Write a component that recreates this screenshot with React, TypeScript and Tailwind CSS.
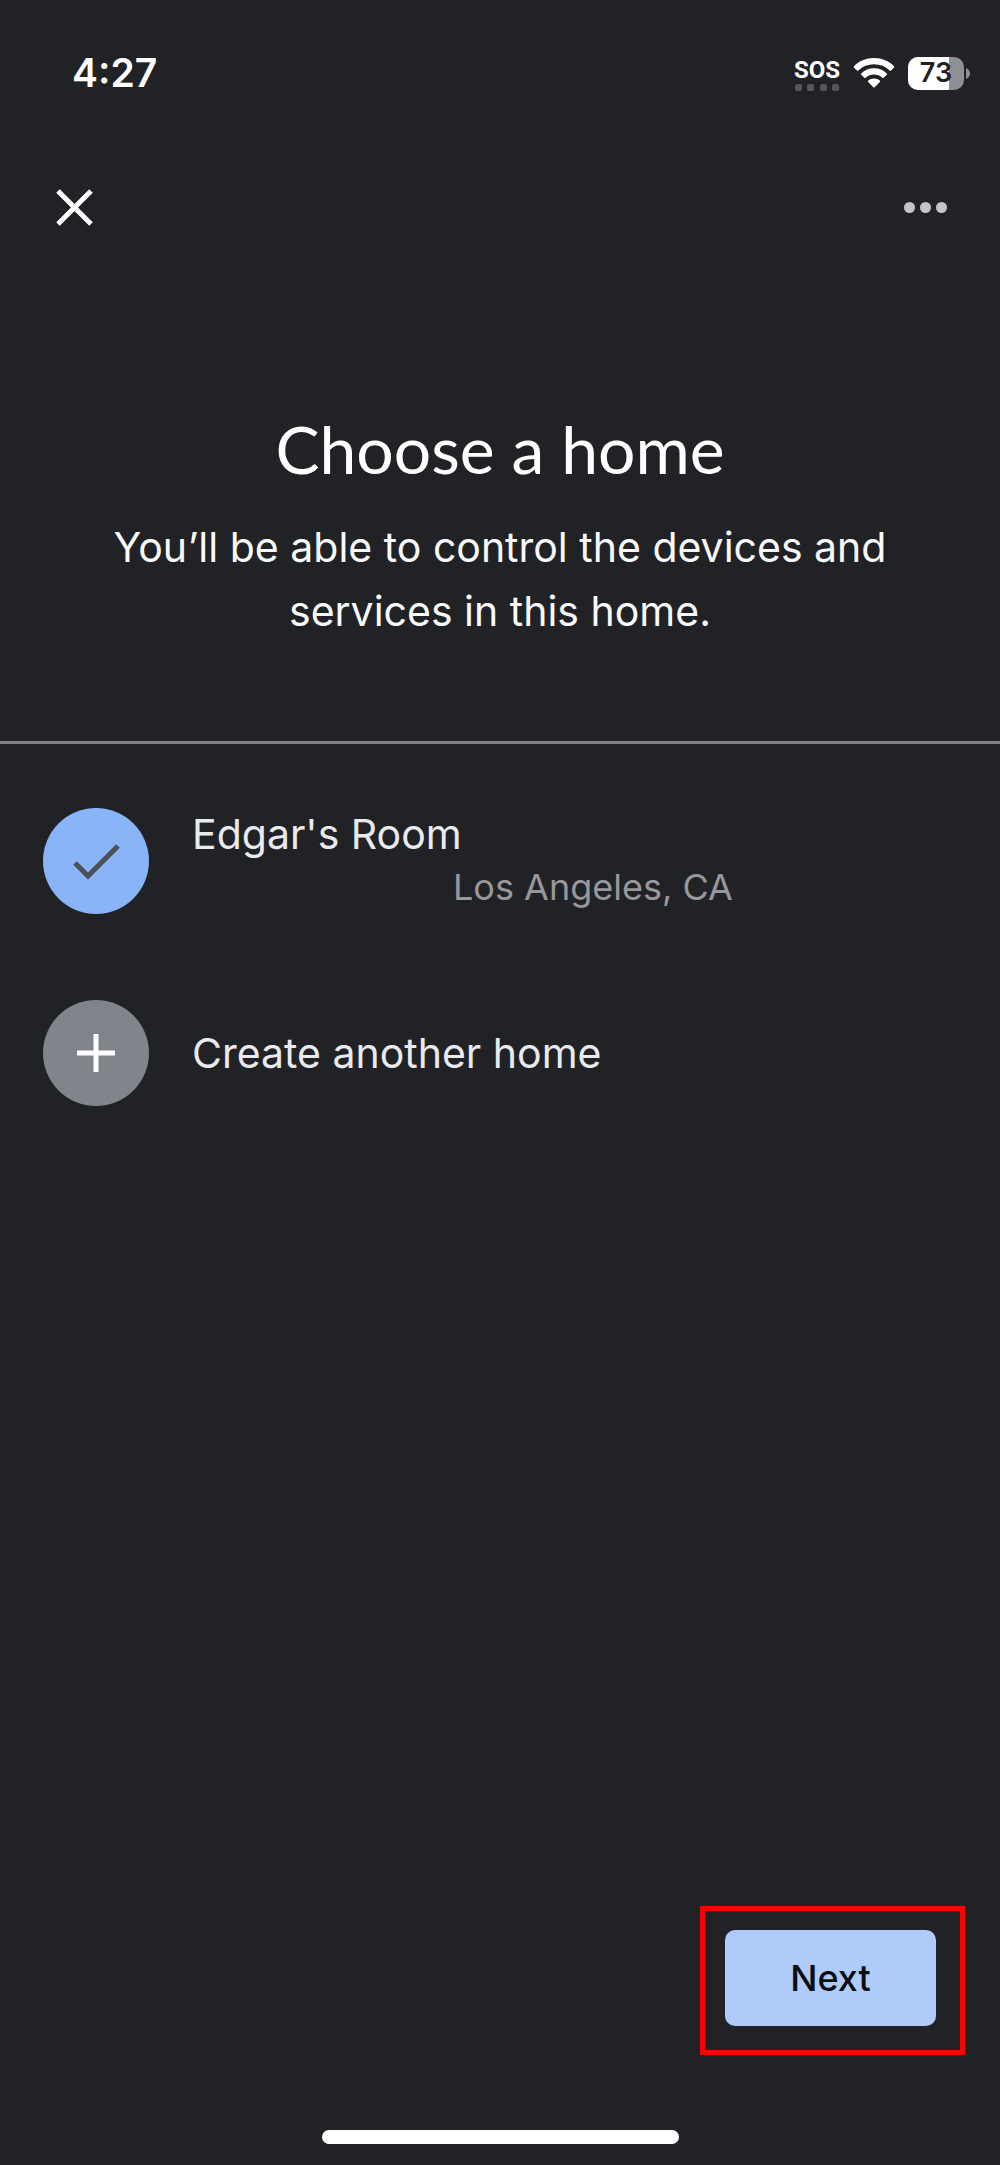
interface StatusBarProps {
  time: string
  battery: number
}

function StatusBar({ time, battery }: StatusBarProps) {
  return (
    <div className="flex h-[146px] items-center justify-between pl-[72px] pr-[30px] text-white">
      <time className="text-[39px] leading-[48px] font-semibold">{time}</time>

      <div className="flex items-center">
        <div className="flex w-11 flex-col items-center">
          <span className="font-['Roboto',sans-serif] text-[24px] leading-7 font-bold">SOS</span>
          <div className="flex w-full justify-between">
            <span className="size-[7px] rounded-xs bg-[#55565a]" />
            <span className="size-[7px] rounded-xs bg-[#55565a]" />
            <span className="size-[7px] rounded-xs bg-[#55565a]" />
            <span className="size-[7px] rounded-xs bg-[#55565a]" />
          </div>
        </div>

        <svg className="ml-[14px] h-8 w-[42px]" viewBox="0 0 42 32" fill="currentColor" aria-label="Wi-Fi">
          <path d="M21 1C13 1 6 4 1 9.200Q.4 10 1 10.700L4 13.600Q4.700 14.200 5.400 13.600C9.600 9.500 15 7.300 21 7.300S32.400 9.500 36.600 13.600Q37.300 14.200 38 13.600L41 10.700Q41.600 10 41 9.200C36 4 29 1 21 1Z" />
          <path d="M21 11.300C16 11.300 11.500 13.200 8.200 16.400Q7.500 17.100 8.200 17.800L11.300 20.800Q12 21.400 12.700 20.800C15 18.700 17.800 17.600 21 17.600S27 18.700 29.300 20.800Q30 21.400 30.700 20.800L33.800 17.800Q34.500 17.100 33.800 16.400C30.500 13.200 26 11.300 21 11.300Z" />
          <path d="M21 21.500C18.700 21.500 16.700 22.300 15.200 23.600Q14.500 24.300 15.200 25L20.300 30.200Q21 30.900 21.700 30.200L26.800 25Q27.500 24.300 26.800 23.600C25.300 22.300 23.300 21.500 21 21.500Z" />
        </svg>

        <div className="relative ml-[13px] flex h-[33px] w-14 items-center justify-center overflow-hidden rounded-[10px] bg-[#8f9093]">
          <div className="absolute inset-y-0 left-0 bg-white" style={{ width: `${battery}%` }} />
          <span className="relative text-[27px] leading-8 font-semibold text-[#212226]">{battery}</span>
        </div>
        <svg className="ml-0.5 h-[11px] w-1" viewBox="0 0 4 11" fill="#8f9093">
          <path d="M0 0C2.500 1 4 3 4 5.500S2.500 10 0 11Z" />
        </svg>
      </div>
    </div>
  )
}

export default function App() {
  return (
    <div className="flex min-h-screen flex-col bg-[#212226] font-['Inter',sans-serif]">
      <StatusBar time="4:27" battery={73} />

      <header className="flex h-[123px] items-center justify-between pl-14 pr-[53px]">
        <button type="button" aria-label="Close" className="text-white">
          <svg className="size-[37px]" viewBox="0 0 37 37" stroke="currentColor" strokeWidth="5">
            <path d="M2 2L35 35M35 2L2 35" />
          </svg>
        </button>
        <button type="button" aria-label="More options" className="flex gap-[5px]">
          <span className="size-[11px] rounded-full bg-[#c4c5c9]" />
          <span className="size-[11px] rounded-full bg-[#c4c5c9]" />
          <span className="size-[11px] rounded-full bg-[#c4c5c9]" />
        </button>
      </header>

      <main className="flex grow flex-col">
        <section className="border-b-3 border-[#808186] px-24 pt-[144px] pb-[98px] text-center">
          <h1 className="font-['Lato',sans-serif] text-[66px] leading-[72px] text-white">Choose a home</h1>
          <p className="mt-[30px] text-[41px] leading-[64px] text-[#f8f9fa]">
            You’ll be able to control the devices and services in this home.
          </p>
        </section>

        <section className="flex flex-col gap-[86px] px-[43px] pt-16 text-[41px] leading-[53px] text-[#e8eaed]">
          <label className="flex items-center gap-[43px]">
            <span className="relative size-[106px] shrink-0">
              <input
                type="radio"
                name="home"
                defaultChecked
                className="block size-full appearance-none rounded-full bg-[#8ab4f8]"
              />
              <svg
                className="pointer-events-none absolute inset-0 size-full"
                viewBox="0 0 106 106"
                fill="none"
                stroke="#4b5154"
                strokeWidth="5"
              >
                <path d="M32 55L45 68L75 38" />
              </svg>
            </span>
            <span className="flex flex-col">
              <span>Edgar's Room</span>
              <span className="pl-[261px] text-[36px] text-[#97989c]">Los Angeles, CA</span>
            </span>
          </label>

          <button type="button" className="flex items-center gap-[43px] text-left">
            <span className="flex size-[106px] shrink-0 items-center justify-center rounded-full bg-[#80848b] text-white">
              <svg className="size-[38px]" viewBox="0 0 38 38" stroke="currentColor" strokeWidth="5">
                <path d="M19 0V38M0 19H38" />
              </svg>
            </span>
            <span>Create another home</span>
          </button>
        </section>
      </main>

      <footer className="flex flex-col pb-[21px]">
        <div className="mr-[35px] self-end border-5 border-[#fe0000] pt-[19px] pr-6 pb-6 pl-5">
          <button
            type="button"
            className="block h-24 w-[211px] rounded-[10px] bg-[#aecbfa] text-[36px] font-medium text-[#0c0d10]"
          >
            Next
          </button>
        </div>
        <div className="mt-[75px] h-[14px] w-[357px] self-center rounded-full bg-white" />
      </footer>
    </div>
  )
}
